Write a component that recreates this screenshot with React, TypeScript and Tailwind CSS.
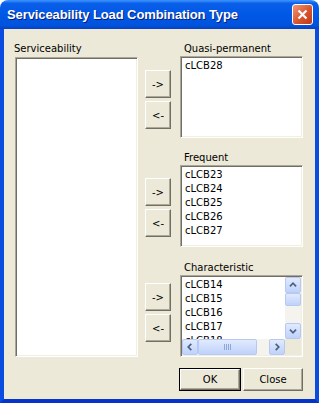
import React from "react";

const sunken =
  "border border-t-[#ACA899] border-l-[#ACA899] border-b-white border-r-white shadow-[inset_1px_1px_0_#716F64,inset_-1px_-1px_0_#F1EFE2] bg-white";

const raised =
  "flex items-center justify-center bg-[#ECE9D8] border border-t-white border-l-white border-b-[#716F64] border-r-[#716F64] shadow-[inset_-1px_-1px_0_#ACA899]";

function Arrow({ dir }: { dir: "up" | "down" | "left" | "right" }) {
  const d = {
    up: "M4.5 9.5 L8 6 L11.5 9.5",
    down: "M4.5 6.5 L8 10 L11.5 6.5",
    left: "M9.5 4.5 L6 8 L9.5 11.5",
    right: "M6.5 4.5 L10 8 L6.5 11.5",
  }[dir];
  return (
    <svg width="16" height="16" viewBox="0 0 16 16">
      <path d={d} fill="none" stroke="#4D6185" strokeWidth="2" />
    </svg>
  );
}

const sbBtn =
  "flex items-center justify-center rounded-[2px] border border-[#B7C9F3] bg-[linear-gradient(180deg,#E1EAFE,#BFD2FB)]";

function ListBox({ items, scroll }: { items: string[]; scroll?: boolean }) {
  if (scroll) {
    return (
      <div className={`${sunken} h-[82px] p-[1px] grid grid-cols-[1fr_16px] grid-rows-[1fr_16px] overflow-hidden`}>
        <div className="overflow-hidden pl-[3px] pt-[1px]">
          {items.map((it) => (
            <div key={it} className="leading-[14px]">{it}</div>
          ))}
        </div>
        <div className="flex flex-col bg-[#F4F3EE]">
          <div className={`${sbBtn} h-[16px]`}><Arrow dir="up" /></div>
          <div className={`${sbBtn} h-[13px]`} />
          <div className="flex-1" />
          <div className={`${sbBtn} h-[16px]`}><Arrow dir="down" /></div>
        </div>
        <div className="flex bg-[#F4F3EE]">
          <div className={`${sbBtn} w-[16px]`}><Arrow dir="left" /></div>
          <div className={`${sbBtn} w-[59px] gap-[1px]`}>
            <span className="w-[1px] h-[6px] bg-[#8DA6DC]" />
            <span className="w-[1px] h-[6px] bg-[#8DA6DC]" />
            <span className="w-[1px] h-[6px] bg-[#8DA6DC]" />
            <span className="w-[1px] h-[6px] bg-[#8DA6DC]" />
          </div>
          <div className="flex-1" />
          <div className={`${sbBtn} w-[16px]`}><Arrow dir="right" /></div>
        </div>
        <div className="bg-[#ECE9D8]" />
      </div>
    );
  }
  return (
    <div className={`${sunken} h-[82px] pl-[4px] pt-[2px]`}>
      {items.map((it) => (
        <div key={it} className="leading-[14px]">{it}</div>
      ))}
    </div>
  );
}

function Group({
  label,
  items,
  btnTop,
  scroll,
  className = "",
}: {
  label: string;
  items: string[];
  btnTop: string;
  scroll?: boolean;
  className?: string;
}) {
  return (
    <div className={`flex items-start gap-[9px] ${className}`}>
      <div className={`flex flex-col gap-[3px] ${btnTop}`}>
        <button className={`${raised} w-[26px] h-[28px]`}>-&gt;</button>
        <button className={`${raised} w-[26px] h-[28px]`}>&lt;-</button>
      </div>
      <div className="w-[123px] flex flex-col">
        <div className="h-[14px] leading-[14px] pl-[4px]">{label}</div>
        <ListBox items={items} scroll={scroll} />
      </div>
    </div>
  );
}

export default function App() {
  return (
    <div className="w-[319px] h-[403px] flex flex-col bg-white font-['DejaVu_Sans',sans-serif] text-[10px] text-black overflow-hidden">
      {/* barra de título */}
      <div className="h-[29px] shrink-0 rounded-t-[8px] flex items-center justify-between pl-[7px] pr-[6px] bg-[linear-gradient(180deg,#3D95FF_0%,#0A5FE8_12%,#0058E6_50%,#0053DD_88%,#0A3FC0_100%)]">
        <span className="text-white font-bold text-[13px] font-['Liberation_Sans',sans-serif] [text-shadow:1px_1px_#0A1E7A] tracking-[-0.1px]">
          Serviceability Load Combination Type
        </span>
        <div className="w-[21px] h-[21px] rounded-[3px] border border-white flex items-center justify-center bg-[linear-gradient(135deg,#F09878,#D8542E_55%,#C0391A)]">
          <svg width="13" height="13" viewBox="0 0 13 13">
            <path d="M2.5 2.5 L10.5 10.5 M10.5 2.5 L2.5 10.5" stroke="white" strokeWidth="2.2" />
          </svg>
        </div>
      </div>

      {/* área cliente */}
      <div className="flex-1 flex flex-col bg-[#ECE9D8] border-l-4 border-r-4 border-b-4 border-l-[#0A4BE0] border-r-[#0A4BE0] border-b-[#0734C8]">
        <div className="flex pl-[11px] pt-[13px]">
          <div className="w-[123px] flex flex-col">
            <div className="h-[15px] leading-[14px] -ml-[1px]">Serviceability</div>
            <div className={`${sunken} h-[300px]`} />
          </div>
          <div className="flex flex-col ml-[7px]">
            <Group label="Quasi-permanent" items={["cLCB28"]} btnTop="mt-[28px]" />
            <Group
              label="Frequent"
              items={["cLCB23", "cLCB24", "cLCB25", "cLCB26", "cLCB27"]}
              btnTop="mt-[27px]"
              className="mt-[13px]"
            />
            <Group
              label="Characteristic"
              items={["cLCB14", "cLCB15", "cLCB16", "cLCB17", "cLCB18"]}
              btnTop="mt-[22px]"
              className="mt-[14px]"
              scroll
            />
          </div>
        </div>

        <div className="flex justify-end gap-[2px] pr-[12px] mt-[11px]">
          <button className="w-[62px] h-[23px] border border-black p-0">
            <div className={`${raised} w-full h-full`}>OK</div>
          </button>
          <button className={`${raised} w-[60px] h-[23px]`}>Close</button>
        </div>
      </div>
    </div>
  );
}
